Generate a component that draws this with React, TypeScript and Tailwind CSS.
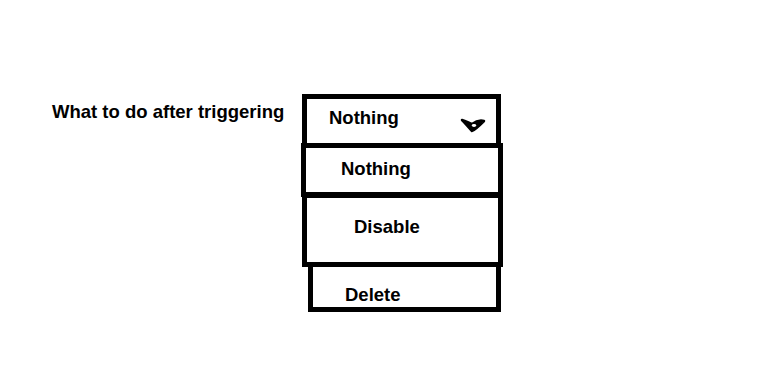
import React from "react";

// hand drawn dropdown arrow
function Arrow() {
  return (
    <svg width="26" height="16" viewBox="0 0 26 16" className="ml-auto mt-[8px]">
      <path
        d="M2 3 C6 4, 9 6, 12 7 C16 4, 20 3, 24 4 C20 8, 16 12, 12 14 C8 10, 5 6, 2 3 Z"
        fill="black"
        stroke="black"
        strokeWidth="2.5"
        strokeLinejoin="round"
      />
      <ellipse cx="14" cy="8.5" rx="2.2" ry="1.4" fill="white" />
    </svg>
  );
}

export default function App() {
  const font = "font-['Liberation_Sans',Arial,sans-serif] font-bold text-[18.5px] leading-[18px] text-black";

  return (
    <div className={`w-[770px] h-[385px] bg-white ${font}`}>
      <div className="flex items-start pt-[94px] pl-[52px]">
        {/* LABEL */}
        <div className="mt-[9px] w-[249px]">What to do after triggering</div>

        {/* DROPDOWN */}
        <div className="flex flex-col">
          {/* SELECTED */}
          <div className="ml-[1px] w-[199px] h-[49px] border-[5px] border-b-0 border-black flex items-start pt-[10px] pl-[22px] pr-[10px]">
            <span>Nothing</span>
            <Arrow />
          </div>

          {/* OPTIONS */}
          <div className="w-[202px] h-[54px] border-[5px] border-black pt-[12px] pl-[35px]">
            Nothing
          </div>
          <div className="relative -mt-[4px] ml-[1px] w-[201px] h-[74px] border-[5px] border-black pt-[20px] pl-[47px]">
            Disable
          </div>
          <div className="relative -mt-[5px] ml-[7px] w-[193px] h-[50px] border-[5px] border-black pt-[19px] pl-[32px]">
            Delete
          </div>
        </div>
      </div>
    </div>
  );
}
